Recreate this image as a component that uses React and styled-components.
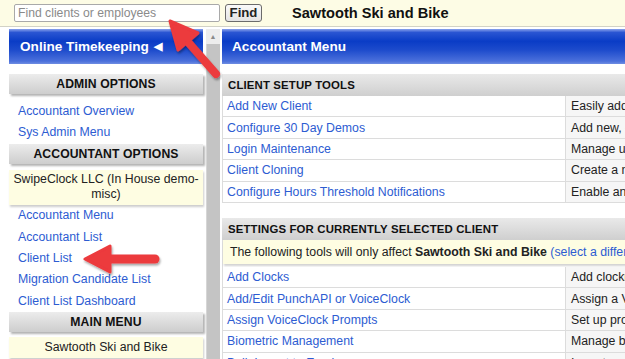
import React from "react";
import styled, { createGlobalStyle } from "styled-components";

const GlobalStyle = createGlobalStyle`
  html, body { margin: 0; padding: 0; overflow: hidden; background: #fff; }
  body { font-family: "Liberation Sans", Arial, sans-serif; width: 625px; height: 359px; position: relative; }
  * { box-sizing: border-box; }
`;

const TopBar = styled.div`
  height: 27px;
  background: #fdfce5;
  border-bottom: 1px solid #d2d2c6;
  display: flex;
  align-items: center;
  padding-left: 14px;
  padding-bottom: 1px;
`;

const SearchInput = styled.input`
  width: 206px;
  height: 18px;
  border: 1px solid #a9a9a9;
  border-radius: 2px;
  padding: 0 3px;
  font-family: "Liberation Sans", Arial, sans-serif;
  font-size: 12.2px;
  color: #333;
  background: #fff;
  &::placeholder { color: #8a8a8a; }
`;

const FindButton = styled.button`
  margin-left: 5px;
  width: 37px;
  height: 18px;
  padding: 0;
  border: 1px solid #6b6b6b;
  border-radius: 3px;
  background: linear-gradient(#fafafa, #e4e4e4);
  font-family: "Liberation Sans", Arial, sans-serif;
  font-weight: bold;
  font-size: 13.2px;
  color: #222;
`;

const SiteTitle = styled.div`
  margin-left: 30px;
  font-weight: bold;
  font-size: 14.6px;
  color: #111;
`;

const Main = styled.div`
  display: flex;
  padding-top: 2px;
  height: calc(100vh - 27px);
  overflow: hidden;
`;

const LeftFrame = styled.div`
  flex: 0 0 222px;
  display: flex;
  padding-left: 9px;
`;

const LeftColumn = styled.div`
  width: 194px;
  display: flex;
  flex-direction: column;
  & > * { flex-shrink: 0; }
`;

const Scrollbar = styled.div`
  margin-left: 3px;
  width: 14px;
  display: flex;
  flex-direction: column;
  background: #c6c6c6;
`;

const ScrollButton = styled.div`
  height: 15px;
  background: #ededed;
  color: #8a8a8a;
  font-size: 7px;
  display: flex;
  align-items: center;
  justify-content: center;
  line-height: 1;
`;

const ScrollThumb = styled.div`
  flex: 1;
  background: #c4c4c4;
  border-left: 1px solid #d6d6d6;
`;

const BlueHeader = styled.div`
  height: 35px;
  display: flex;
  align-items: center;
  padding-left: ${(p) => p.$pad || 11}px;
  background: linear-gradient(#8aa2ec 0%, #2a55d2 10%, #0a3cc6 35%, #1d4bcc 60%, #4b70db 92%, #6f8de2 100%);
  color: #fff;
  font-weight: bold;
  font-size: 13.6px;
  white-space: nowrap;
`;

const Caret = styled.span`
  margin-left: 5px;
  font-size: 11px;
`;

const SideHeader = styled.div`
  margin-top: ${(p) => p.$mt || 1}px;
  margin-bottom: ${(p) => p.$mb || 6}px;
  height: 20px;
  display: flex;
  align-items: center;
  justify-content: center;
  background: linear-gradient(#ececec, #cdcdcd);
  box-shadow: 2px 2px 2px rgba(0, 0, 0, 0.3);
  font-weight: bold;
  font-size: 12.2px;
  color: #111;
  letter-spacing: 0.1px;
`;

const SideLink = styled.a`
  display: flex;
  align-items: center;
  height: 21.35px;
  padding-left: 9px;
  font-size: 12.3px;
  color: #2d5cd2;
  text-decoration: none;
  white-space: nowrap;
`;

const YellowBox = styled.div`
  background: #fefde2;
  box-shadow: 1px 2px 2px rgba(0, 0, 0, 0.2);
  text-align: center;
  font-size: 12.3px;
  color: #222;
  line-height: 15px;
  padding: ${(p) => p.$pad || "3px 4px"};
`;

const RightPanel = styled.div`
  flex: 0 0 620px;
  display: flex;
  flex-direction: column;
  & > * { flex-shrink: 0; }
`;

const ToolHeader = styled.div`
  margin-top: ${(p) => p.$mt}px;
  height: 22px;
  display: flex;
  align-items: center;
  padding-left: 6px;
  background: linear-gradient(#e9e9e9, #cfcfcf);
  font-weight: bold;
  font-size: 11.4px;
  color: #111;
  letter-spacing: 0.15px;
  white-space: nowrap;
`;

const ToolTable = styled.div`
  display: grid;
  grid-template-columns: 343px 1fr;
  border-left: 1px solid #dcdcdc;
`;

const ToolCell = styled.div`
  height: ${(p) => p.$h || 21.4}px;
  display: flex;
  align-items: center;
  padding-left: ${(p) => (p.$desc ? 5 : 4)}px;
  border-bottom: 1px solid #dcdcdc;
  border-right: ${(p) => (p.$desc ? "none" : "1px solid #dcdcdc")};
  background: ${(p) => (p.$desc ? "#f6f6f6" : "#fff")};
  font-size: 12.3px;
  color: ${(p) => (p.$desc ? "#222" : "#2d5cd2")};
  white-space: nowrap;
  overflow: hidden;
`;

const Notice = styled.div`
  grid-column: 1 / -1;
  height: 24px;
  display: flex;
  align-items: center;
  padding-left: 7px;
  background: #fefde2;
  box-shadow: 1px 2px 2px rgba(0, 0, 0, 0.18);
  margin-bottom: 3px;
  font-size: 12.3px;
  color: #222;
  white-space: nowrap;
`;

const NoticeLink = styled.span`
  color: #2d5cd2;
`;

const Overlay = styled.svg`
  position: absolute;
  left: 0;
  top: 0;
  pointer-events: none;
`;

const setupTools = [
  ["Add New Client", "Easily add a new client account"],
  ["Configure 30 Day Demos", "Add new, edit or remove demos"],
  ["Login Maintenance", "Manage user logins"],
  ["Client Cloning", "Create a new client from another"],
  ["Configure Hours Threshold Notifications", "Enable and configure notifications"],
];

const clientTools = [
  ["Add Clocks", "Add clockroom devices"],
  ["Add/Edit PunchAPI or VoiceClock", "Assign a VoiceClock"],
  ["Assign VoiceClock Prompts", "Set up prompts"],
  ["Biometric Management", "Manage biometric templates"],
  ["Bulk Import to Employees", "Import employees"],
];

function Arrows() {
  return (
    <Overlay width="625" height="359" viewBox="0 0 625 359">
      <defs>
        <filter id="sh" x="-20%" y="-20%" width="140%" height="140%">
          <feDropShadow dx="1" dy="2" stdDeviation="1.2" floodColor="#000" floodOpacity="0.35" />
        </filter>
      </defs>
      <g filter="url(#sh)" fill="#ec3a3d" stroke="#ec3a3d" strokeLinejoin="round" strokeLinecap="round">
        <line x1="216" y1="74" x2="188" y2="42" strokeWidth="8" />
        <polygon points="170,21 198,33 178,50" strokeWidth="3" />
        <line x1="155" y1="259" x2="105" y2="259" strokeWidth="9" />
        <polygon points="85,259 110,246 110,272" strokeWidth="3" />
      </g>
    </Overlay>
  );
}

export default function App() {
  return (
    <>
      <GlobalStyle />
      <TopBar>
        <SearchInput placeholder="Find clients or employees" />
        <FindButton>Find</FindButton>
        <SiteTitle>Sawtooth Ski and Bike</SiteTitle>
      </TopBar>
      <Main>
        <LeftFrame>
          <LeftColumn>
            <BlueHeader>
              Online Timekeeping<Caret>◀</Caret>
            </BlueHeader>
            <SideHeader $mt={10}>ADMIN OPTIONS</SideHeader>
            <SideLink>Accountant Overview</SideLink>
            <SideLink>Sys Admin Menu</SideLink>
            <SideHeader>ACCOUNTANT OPTIONS</SideHeader>
            <YellowBox $pad="2.5px 4px">SwipeClock LLC (In House demo-misc)</YellowBox>
            <SideLink>Accountant Menu</SideLink>
            <SideLink>Accountant List</SideLink>
            <SideLink>Client List</SideLink>
            <SideLink>Migration Candidate List</SideLink>
            <SideLink>Client List Dashboard</SideLink>
            <SideHeader $mb={5}>MAIN MENU</SideHeader>
            <YellowBox>Sawtooth Ski and Bike</YellowBox>
          </LeftColumn>
          <Scrollbar>
            <ScrollButton>▲</ScrollButton>
            <ScrollThumb />
          </Scrollbar>
        </LeftFrame>
        <RightPanel>
          <BlueHeader $pad={10}>Accountant Menu</BlueHeader>
          <ToolHeader $mt={10}>CLIENT SETUP TOOLS</ToolHeader>
          <ToolTable>
            {setupTools.map(([name, desc]) => (
              <React.Fragment key={name}>
                <ToolCell>{name}</ToolCell>
                <ToolCell $desc>{desc}</ToolCell>
              </React.Fragment>
            ))}
          </ToolTable>
          <ToolHeader $mt={15}>SETTINGS FOR CURRENTLY SELECTED CLIENT</ToolHeader>
          <ToolTable>
            <Notice>
              The following tools will only affect&nbsp;<b>Sawtooth Ski and Bike</b>&nbsp;
              <NoticeLink>(select a different client)</NoticeLink>
            </Notice>
            {clientTools.map(([name, desc]) => (
              <React.Fragment key={name}>
                <ToolCell>{name}</ToolCell>
                <ToolCell $desc>{desc}</ToolCell>
              </React.Fragment>
            ))}
          </ToolTable>
        </RightPanel>
      </Main>
      <Arrows />
    </>
  );
}
